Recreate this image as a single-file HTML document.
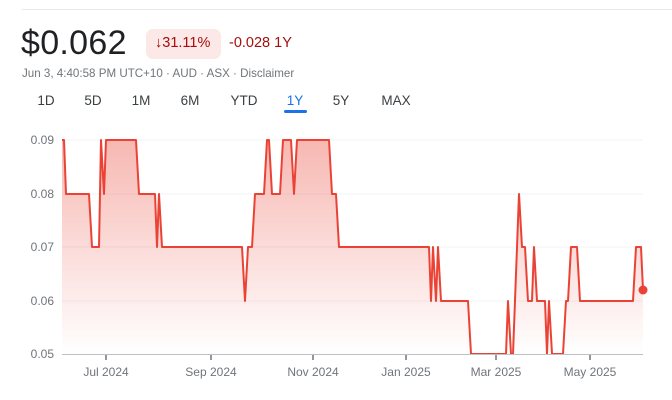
<!DOCTYPE html>
<html><head><meta charset="utf-8"><style>
body{margin:0;width:672px;height:400px;background:#fff;font-family:"Liberation Sans",Arial,sans-serif;position:relative;overflow:hidden}
.a{position:absolute;white-space:nowrap}
.tab{position:absolute;top:93px;font-size:13.5px;color:#3c4043;transform:translateX(-50%)}
</style></head><body>
<div class="a" style="left:22px;top:9px;width:650px;height:1px;background:#e8eaed"></div>
<div class="a" style="left:21px;top:24px;font-size:34px;color:#202124;letter-spacing:0.3px">$0.062</div>
<div class="a" style="left:146px;top:29px;width:75px;height:30px;background:#fce8e6;border-radius:7px"></div>
<div class="a" style="left:155px;top:35px;font-size:14.5px;color:#a50e0e">↓31.11%</div>
<div class="a" style="left:229px;top:35px;font-size:14.5px;color:#a50e0e">-0.028 1Y</div>
<div class="a" style="left:22px;top:67px;font-size:11.6px;color:#70757a">Jun 3, 4:40:58 PM UTC+10 · AUD · ASX · Disclaimer</div>
<div class="tab" style="left:46px">1D</div>
<div class="tab" style="left:93px">5D</div>
<div class="tab" style="left:141px">1M</div>
<div class="tab" style="left:190px">6M</div>
<div class="tab" style="left:244px">YTD</div>
<div class="tab" style="left:295px;color:#1a73e8">1Y</div>
<div class="tab" style="left:341px">5Y</div>
<div class="tab" style="left:396px">MAX</div>
<div class="a" style="left:284px;top:110px;width:23px;height:3px;background:#1a73e8;border-radius:2px"></div>
<svg class="a" style="left:0;top:0" width="672" height="400">
<defs><linearGradient id="g" x1="0" y1="140" x2="0" y2="354" gradientUnits="userSpaceOnUse"><stop offset="0" stop-color="#ea4335" stop-opacity="0.38"/><stop offset="1" stop-color="#ea4335" stop-opacity="0"/></linearGradient></defs>
<g stroke="#f1f3f4" stroke-width="1">
<line x1="62" y1="140" x2="643" y2="140"/><line x1="62" y1="194" x2="643" y2="194"/><line x1="62" y1="247" x2="643" y2="247"/><line x1="62" y1="301" x2="643" y2="301"/>
</g>
<g font-size="12" fill="#70757a" text-anchor="end">
<text x="54" y="144">0.09</text><text x="54" y="198">0.08</text><text x="54" y="251">0.07</text><text x="54" y="305">0.06</text><text x="54" y="358">0.05</text>
</g>
<path d="M62,140 L64,140 L66,194 L89,194 L92,247 L99,247 L101,140 L104,194 L106,140 L136,140 L139,194 L155,194 L157,247 L159,194 L162,247 L242,247 L245,301 L248,247 L252,247 L255,194 L264,194 L267,140 L269,140 L272,194 L280,194 L283,140 L291,140 L294,194 L297,140 L329,140 L332,194 L336,194 L339,247 L429,247 L431,301 L433,247 L436,301 L438,247 L441,301 L468,301 L471,354 L506,354 L508,301 L511,354 L513,354 L519,194 L522,247 L525,247 L528,301 L532,301 L534,247 L537,301 L545,301 L547,354 L549,301 L552,354 L563,354 L566,301 L568,301 L571,247 L577,247 L580,301 L633,301 L636,247 L641,247 L643,290 L643,354 L62,354 Z" fill="url(#g)"/>
<path d="M62,140 L64,140 L66,194 L89,194 L92,247 L99,247 L101,140 L104,194 L106,140 L136,140 L139,194 L155,194 L157,247 L159,194 L162,247 L242,247 L245,301 L248,247 L252,247 L255,194 L264,194 L267,140 L269,140 L272,194 L280,194 L283,140 L291,140 L294,194 L297,140 L329,140 L332,194 L336,194 L339,247 L429,247 L431,301 L433,247 L436,301 L438,247 L441,301 L468,301 L471,354 L506,354 L508,301 L511,354 L513,354 L519,194 L522,247 L525,247 L528,301 L532,301 L534,247 L537,301 L545,301 L547,354 L549,301 L552,354 L563,354 L566,301 L568,301 L571,247 L577,247 L580,301 L633,301 L636,247 L641,247 L643,290" fill="none" stroke="#ea4335" stroke-width="2" stroke-linejoin="round"/>
<line x1="62" y1="354.5" x2="643" y2="354.5" stroke="#bdc1c6" stroke-width="1"/>
<g stroke="#70757a" stroke-width="1.5">
<line x1="106" y1="355" x2="106" y2="360"/><line x1="211" y1="355" x2="211" y2="360"/><line x1="313" y1="355" x2="313" y2="360"/><line x1="406" y1="355" x2="406" y2="360"/><line x1="496" y1="355" x2="496" y2="360"/><line x1="590" y1="355" x2="590" y2="360"/>
</g>
<g font-size="12" fill="#70757a" text-anchor="middle">
<text x="106" y="376">Jul 2024</text><text x="211" y="376">Sep 2024</text><text x="313" y="376">Nov 2024</text><text x="406" y="376">Jan 2025</text><text x="496" y="376">Mar 2025</text><text x="590" y="376">May 2025</text>
</g>
<circle cx="643" cy="290" r="4.5" fill="#ea4335"/>
</svg>
</body></html>
